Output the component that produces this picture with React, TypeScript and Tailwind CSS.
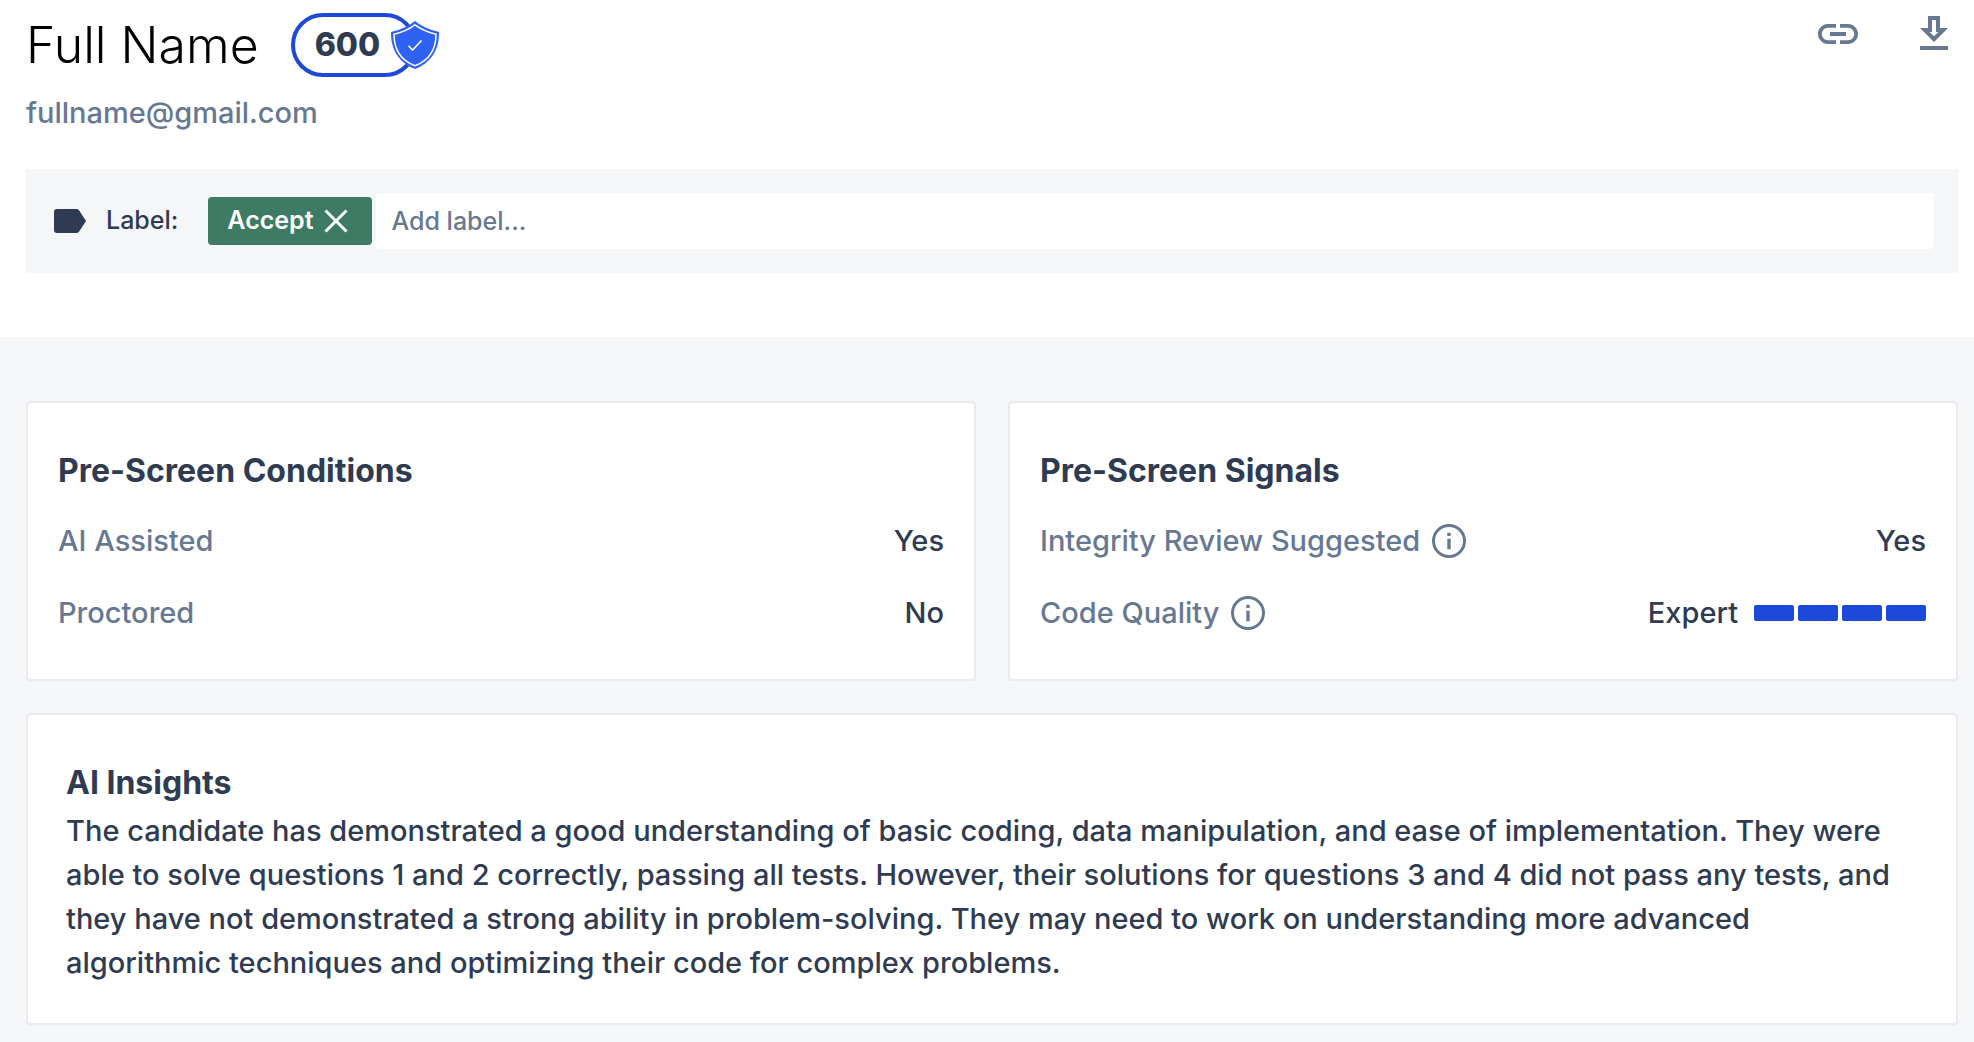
import { useState } from 'react';
import type { ReactNode } from 'react';

const LABEL_CLASS = 'text-[29px] leading-9 font-medium text-[#677893]';
const VALUE_CLASS = 'text-[29px] leading-9 font-medium text-[#2f3b52]';

function ShieldIcon({ className }: { className?: string }) {
  return (
    <svg viewBox="0 0 48 48" className={className} aria-hidden="true">
      <path
        d="M24 0C30 4.800 38 8.700 48 11C48.600 29 39.500 42.500 24 48C8.500 42.500 -.600 29 0 11C10 8.700 18 4.800 24 0Z"
        fill="#2f62f3"
      />
      <path
        d="M24 3.800C30 8.200 37.500 11.400 45 13.200C45 28.500 37.500 39.600 24 44.700C10.500 39.600 3 28.500 3 13.200C10.500 11.400 18 8.200 24 3.800Z"
        fill="none"
        stroke="#fff"
        strokeWidth="1.500"
      />
      <path d="M17.500 24.800L21.500 29L30.500 19.500" fill="none" stroke="#fff" strokeWidth="1.600" />
    </svg>
  );
}

function LinkIcon() {
  return (
    <svg viewBox="0 0 24 24" className="size-12" fill="currentColor" aria-hidden="true">
      <path d="M3.900 12c0-1.710 1.390-3.100 3.100-3.100h4V7H7c-2.760 0-5 2.240-5 5s2.240 5 5 5h4v-1.900H7c-1.710 0-3.100-1.390-3.100-3.100zM8 13h8v-2H8v2zm9-6h-4v1.900h4c1.710 0 3.100 1.390 3.100 3.100s-1.390 3.100-3.100 3.100h-4V17h4c2.760 0 5-2.240 5-5s-2.240-5-5-5z" />
    </svg>
  );
}

function DownloadIcon() {
  return (
    <svg viewBox="0 0 24 24" className="size-12" fill="currentColor" aria-hidden="true">
      <path d="M19 9h-4V3H9v6H5l7 7 7-7zm-8 2V5h2v6h1.170L12 13.170 9.830 11H11zm-6 7h14v2H5z" />
    </svg>
  );
}

function TagIcon() {
  return (
    <svg viewBox="0 0 32 24" className="h-6 w-8 shrink-0 text-[#2f3b52]" fill="currentColor" aria-hidden="true">
      <path d="M3 0H22.500Q24 0 25 1.300L32 12L25 22.700Q24 24 22.500 24H3Q0 24 0 21V3Q0 0 3 0Z" />
    </svg>
  );
}

function InfoIcon() {
  return (
    <svg viewBox="0 0 34 34" className="size-[34px]" aria-hidden="true">
      <circle cx="17" cy="17" r="15.500" fill="none" stroke="currentColor" strokeWidth="3" />
      <path d="M15.300 8.800h3.400v3.300h-3.400zM15.300 14.800h3.400v10.400h-3.400z" fill="currentColor" />
    </svg>
  );
}

function Card({ title, children }: { title: string; children: ReactNode }) {
  return (
    <section className="rounded border-2 border-[#e9ebef] bg-white px-[30px] pt-12 pb-12">
      <h2 className="text-[32px] leading-10 font-bold text-[#2f3b52]">{title}</h2>
      <dl className="mt-8 space-y-9">{children}</dl>
    </section>
  );
}

function Row({ label, info, children }: { label: string; info?: boolean; children: ReactNode }) {
  return (
    <div className="flex items-center justify-between">
      <dt className={`flex items-center gap-3 ${LABEL_CLASS}`}>
        {label}
        {info && (
          <button type="button" aria-label={`About ${label}`}>
            <InfoIcon />
          </button>
        )}
      </dt>
      <dd className={`flex items-center gap-4 ${VALUE_CLASS}`}>{children}</dd>
    </div>
  );
}

function LevelBar({ level }: { level: number }) {
  return (
    <span className="flex gap-1">
      {Array.from({ length: level }, (_, i) => (
        <span key={i} className="h-4 w-10 rounded-[2px] bg-[#1c49d8]" />
      ))}
    </span>
  );
}

export default function App() {
  const [labels, setLabels] = useState(['Accept']);

  return (
    <div className="min-h-screen bg-[#f4f6f8] font-['Inter',sans-serif]">
      <header className="bg-white pt-[10px] pr-4 pb-16 pl-[26px]">
        <div className="flex items-start justify-between">
          <div className="flex items-center pt-[3px]">
            <h1 className="text-[50px] leading-[64px] font-light text-black">Full Name</h1>
            <div className="relative ml-8 flex h-16 w-[126px] items-center rounded-full border-4 border-[#1c49d8] pl-5">
              <span className="text-[32px] font-extrabold text-[#2f3b52]">600</span>
              <ShieldIcon className="absolute top-1 -right-[26px] size-12" />
            </div>
          </div>
          <div className="flex gap-12 text-[#677893]">
            <button type="button" aria-label="Copy link">
              <LinkIcon />
            </button>
            <button type="button" aria-label="Download">
              <DownloadIcon />
            </button>
          </div>
        </div>

        <p className={`mt-[18px] ${LABEL_CLASS}`}>fullname@gmail.com</p>

        <div className="mt-[38px] flex items-center bg-[#f4f6f8] py-6 pr-6 pl-7">
          <TagIcon />
          <label htmlFor="add-label" className="mr-[30px] ml-5 text-[25px] font-medium text-[#2f3b52]">
            Label:
          </label>
          {labels.map((label) => (
            <button
              key={label}
              type="button"
              aria-label={`Remove label ${label}`}
              onClick={() => setLabels(labels.filter((l) => l !== label))}
              className="mr-1 flex h-12 items-center gap-[10px] rounded bg-[#3d7b65] pr-6 pl-[19px] text-[25px] font-semibold text-white"
            >
              {label}
              <svg viewBox="0 0 24 24" className="size-6" fill="none" stroke="currentColor" strokeWidth="3" aria-hidden="true">
                <path d="M1.500 1.500L22.500 22.500M22.500 1.500L1.500 22.500" />
              </svg>
            </button>
          ))}
          <input
            id="add-label"
            type="text"
            placeholder="Add label..."
            className="h-14 min-w-0 flex-1 rounded bg-white px-4 text-[25px] font-medium text-[#2f3b52] outline-none placeholder:text-[#677893]"
          />
        </div>
      </header>

      <main className="space-y-8 pt-16 pr-4 pb-4 pl-[26px]">
        <div className="grid grid-cols-2 gap-8">
          <Card title="Pre-Screen Conditions">
            <Row label="AI Assisted">Yes</Row>
            <Row label="Proctored">No</Row>
          </Card>
          <Card title="Pre-Screen Signals">
            <Row label="Integrity Review Suggested" info>
              Yes
            </Row>
            <Row label="Code Quality" info>
              Expert
              <LevelBar level={4} />
            </Row>
          </Card>
        </div>

        <section className="rounded border-2 border-[#e9ebef] bg-white pt-12 pr-14 pb-[38px] pl-[38px] text-[#2f3b52]">
          <h2 className="text-[32px] leading-10 font-bold">AI Insights</h2>
          <p className="mt-[6px] text-[29px] leading-[44px] font-medium">
            The candidate has demonstrated a good understanding of basic coding, data manipulation, and ease of
            implementation. They were able to solve questions 1 and 2 correctly, passing all tests. However, their
            solutions for questions 3 and 4 did not pass any tests, and they have not demonstrated a strong ability in
            problem-solving. They may need to work on understanding more advanced algorithmic techniques and optimizing
            their code for complex problems.
          </p>
        </section>
      </main>
    </div>
  );
}
